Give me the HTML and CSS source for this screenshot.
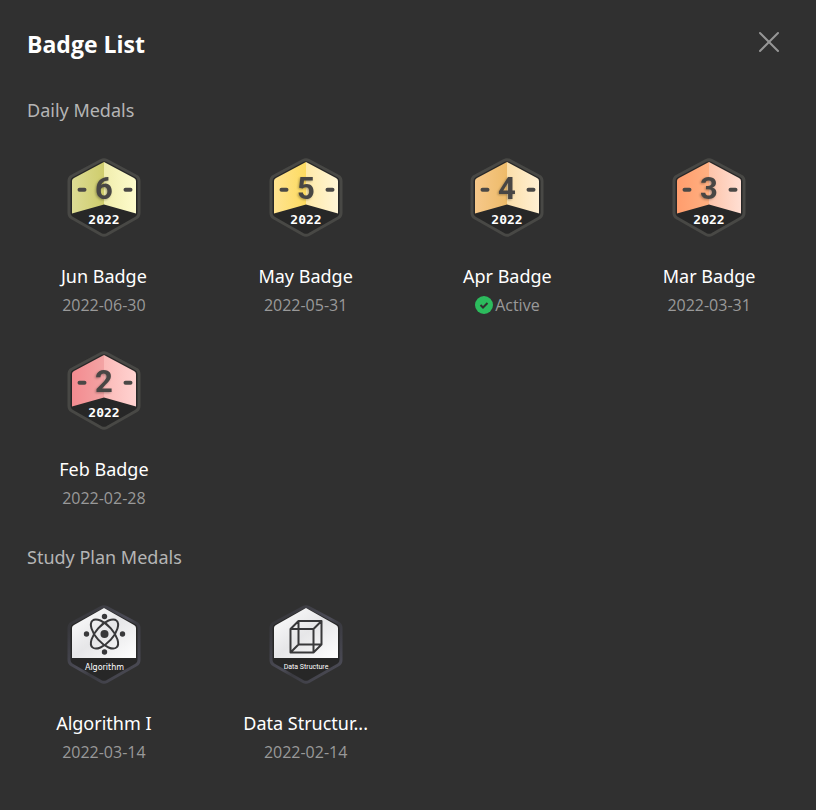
FILE: index.html
```html
<!DOCTYPE html>
<html lang="en">
<head>
    <meta charset="UTF-8">
    <meta name="viewport" content="width=device-width, initial-scale=1.0">
    <title>Badge List</title>
    <link rel="stylesheet" href="styles.css">
</head>
<body>
    <!-- Shared gradients and medal shapes -->
    <svg class="defs" aria-hidden="true">
        <defs>
            <linearGradient id="jun-l"><stop offset="0" stop-color="#dcdb94"/><stop offset="1" stop-color="#cfcd6c"/></linearGradient>
            <linearGradient id="jun-r"><stop offset="0" stop-color="#f0edad"/><stop offset="1" stop-color="#fefccd"/></linearGradient>
            <linearGradient id="may-l"><stop offset="0" stop-color="#ffe391"/><stop offset="1" stop-color="#fddb60"/></linearGradient>
            <linearGradient id="may-r"><stop offset="0" stop-color="#ffeaa9"/><stop offset="1" stop-color="#fff5d6"/></linearGradient>
            <linearGradient id="apr-l"><stop offset="0" stop-color="#f6c88a"/><stop offset="1" stop-color="#eebb69"/></linearGradient>
            <linearGradient id="apr-r"><stop offset="0" stop-color="#fbdfaa"/><stop offset="1" stop-color="#fff0d3"/></linearGradient>
            <linearGradient id="mar-l"><stop offset="0" stop-color="#ff9d6d"/><stop offset="1" stop-color="#ffb081"/></linearGradient>
            <linearGradient id="mar-r"><stop offset="0" stop-color="#fdc4aa"/><stop offset="1" stop-color="#ffdfd3"/></linearGradient>
            <linearGradient id="feb-l"><stop offset="0" stop-color="#f38b90"/><stop offset="1" stop-color="#f3a4a4"/></linearGradient>
            <linearGradient id="feb-r"><stop offset="0" stop-color="#fbbab8"/><stop offset="1" stop-color="#ffd3d1"/></linearGradient>
            <linearGradient id="plate" x1="0" y1="0" x2="1" y2="1"><stop offset="0" stop-color="#ffffff"/><stop offset=".5" stop-color="#e6e6e8"/><stop offset="1" stop-color="#ffffff"/></linearGradient>
            <linearGradient id="rim" x1="0" y1="0" x2="1" y2="1"><stop offset="0" stop-color="#303032"/><stop offset=".5" stop-color="#4c4c57"/><stop offset=".6" stop-color="#3a3a40"/><stop offset="1" stop-color="#50505c"/></linearGradient>
            <path id="hexagon" d="M47 10.5Q50 9 53 10.5L82 26Q85 27.500 85 31V63Q85 66.500 82 68L53 84.500Q50 86 47 84.500L18 68Q15 66.500 15 63V31Q15 27.500 18 26Z"/>
            <path id="face-left" d="M18 31Q18 29 20 28L50 12V54.500L18 63.500Z"/>
            <path id="face-right" d="M82 31Q82 29 80 28L50 12V54.500L82 63.500Z"/>
            <path id="dashes" d="M25.500 39.800H30.500M71.500 39.800H76.500"/>
        </defs>
    </svg>

    <main class="modal">
        <header class="modal-header">
            <h1>Badge List</h1>
            <button type="button" class="close" aria-label="Close">
                <svg viewBox="0 0 22 22"><path d="M2 2L20 20M20 2L2 20"/></svg>
            </button>
        </header>

        <section>
            <h2>Daily Medals</h2>
            <ul class="badges">
                <li class="badge">
                    <svg class="medal" viewBox="10 5 80 85">
                        <use href="#hexagon" class="frame"/>
                        <use href="#face-left" fill="url(#jun-l)"/>
                        <use href="#face-right" fill="url(#jun-r)"/>
                        <use href="#dashes" class="dashes"/>
                        <text class="month" x="50" y="49">6</text>
                        <text class="year" x="50" y="74">2022</text>
                    </svg>
                    <h3>Jun Badge</h3>
                    <p>2022-06-30</p>
                </li>
                <li class="badge">
                    <svg class="medal" viewBox="10 5 80 85">
                        <use href="#hexagon" class="frame"/>
                        <use href="#face-left" fill="url(#may-l)"/>
                        <use href="#face-right" fill="url(#may-r)"/>
                        <use href="#dashes" class="dashes"/>
                        <text class="month" x="50" y="49">5</text>
                        <text class="year" x="50" y="74">2022</text>
                    </svg>
                    <h3>May Badge</h3>
                    <p>2022-05-31</p>
                </li>
                <li class="badge">
                    <svg class="medal" viewBox="10 5 80 85">
                        <use href="#hexagon" class="frame"/>
                        <use href="#face-left" fill="url(#apr-l)"/>
                        <use href="#face-right" fill="url(#apr-r)"/>
                        <use href="#dashes" class="dashes"/>
                        <text class="month" x="50" y="49">4</text>
                        <text class="year" x="50" y="74">2022</text>
                    </svg>
                    <h3>Apr Badge</h3>
                    <p class="active">
                        <svg class="check" viewBox="0 0 18 18"><circle cx="9" cy="9" r="9"/><path d="M5.500 9L8 11.500L12.500 7"/></svg>Active
                    </p>
                </li>
                <li class="badge">
                    <svg class="medal" viewBox="10 5 80 85">
                        <use href="#hexagon" class="frame"/>
                        <use href="#face-left" fill="url(#mar-l)"/>
                        <use href="#face-right" fill="url(#mar-r)"/>
                        <use href="#dashes" class="dashes"/>
                        <text class="month" x="50" y="49">3</text>
                        <text class="year" x="50" y="74">2022</text>
                    </svg>
                    <h3>Mar Badge</h3>
                    <p>2022-03-31</p>
                </li>
                <li class="badge">
                    <svg class="medal" viewBox="10 5 80 85">
                        <use href="#hexagon" class="frame"/>
                        <use href="#face-left" fill="url(#feb-l)"/>
                        <use href="#face-right" fill="url(#feb-r)"/>
                        <use href="#dashes" class="dashes"/>
                        <text class="month" x="50" y="49">2</text>
                        <text class="year" x="50" y="74">2022</text>
                    </svg>
                    <h3>Feb Badge</h3>
                    <p>2022-02-28</p>
                </li>
            </ul>
        </section>

        <section>
            <h2>Study Plan Medals</h2>
            <ul class="badges">
                <li class="badge">
                    <svg class="medal plan" viewBox="10 5 80 85">
                        <use href="#hexagon" class="frame"/>
                        <path class="plate" d="M18 31Q18 29 20 28L50 11L80 28Q82 29 82 31V61H18Z"/>
                        <g class="drawing">
                            <ellipse cx="50.500" cy="37" rx="18" ry="8.500" transform="rotate(48 50.500 37)"/>
                            <ellipse cx="50.500" cy="37" rx="18" ry="8.500" transform="rotate(-48 50.500 37)"/>
                        </g>
                        <g class="dots">
                            <circle cx="50.500" cy="37" r="4"/>
                            <circle cx="50.500" cy="19.500" r="2.700"/>
                            <circle cx="50.500" cy="55" r="2.700"/>
                            <circle cx="32.500" cy="37" r="2.700"/>
                            <circle cx="68.500" cy="37" r="2.700"/>
                        </g>
                        <text class="plan-name" x="50.500" y="73">Algorithm</text>
                    </svg>
                    <h3>Algorithm I</h3>
                    <p>2022-03-14</p>
                </li>
                <li class="badge">
                    <svg class="medal plan" viewBox="10 5 80 85">
                        <use href="#hexagon" class="frame"/>
                        <path class="plate" d="M18 31Q18 29 20 28L50 11L80 28Q82 29 82 31V61H18Z"/>
                        <path class="drawing" d="M34.500 32H57.500V55.500H34.500ZM42.500 24H65.500V47.500H42.500ZM34.500 32L42.500 24M57.500 32L65.500 24M57.500 55.500L65.500 47.500M34.500 55.500L42.500 47.500"/>
                        <text class="plan-name long" x="50" y="72">Data Structure</text>
                    </svg>
                    <h3>Data Structur...</h3>
                    <p>2022-02-14</p>
                </li>
            </ul>
        </section>
    </main>
</body>
</html>
```

FILE: styles.css
```css
* {
    box-sizing: border-box;
}
body {
    margin: 0;
    background-color: #303030;
    color: #fff;
    font-family: 'Noto Sans', 'Open Sans', sans-serif;
}
h1, h2, h3, p, ul {
    margin: 0;
    padding: 0;
}
.defs {
    position: absolute;
    width: 0;
    height: 0;
}
.modal {
    padding: 28px 30px 42px 27px;
}
.modal-header {
    display: flex;
    justify-content: space-between;
    align-items: flex-start;
    padding-right: 6px;
    margin-bottom: 36px;
}
h1 {
    font-family: 'Open Sans', sans-serif;
    font-size: 23px;
    line-height: 32px;
    font-weight: 700;
}
.close {
    width: 22px;
    height: 22px;
    margin-top: 3px;
    padding: 0;
    border: none;
    background: none;
    cursor: pointer;
}
.close svg {
    display: block;
    width: 22px;
    height: 22px;
    fill: none;
    stroke: #969696;
    stroke-width: 2;
    stroke-linecap: round;
}
section + section {
    margin-top: 30px;
}
h2 {
    margin-bottom: 31px;
    font-size: 18px;
    line-height: 28px;
    font-weight: 400;
    color: #b5b5b5;
}
.badges {
    display: grid;
    grid-template-columns: repeat(4, 1fr);
    gap: 28px 48px;
    list-style: none;
}
.badge {
    display: flex;
    flex-direction: column;
    align-items: center;
    min-width: 0;
}
.medal {
    width: 80px;
    height: 85px;
    margin-bottom: 22px;
}
.badge h3 {
    white-space: nowrap;
    font-size: 18px;
    line-height: 28px;
    font-weight: 400;
}
.badge p {
    font-family: 'Open Sans', sans-serif;
    font-size: 16px;
    line-height: 30px;
    color: #999;
}
.badge .active {
    display: flex;
    align-items: center;
    gap: 2px;
}
.check {
    width: 18px;
    height: 18px;
    fill: #2cbb5d;
}
.check path {
    fill: none;
    stroke: #303030;
    stroke-width: 2;
}

/* medal artwork */
.frame {
    fill: #272727;
    stroke: #484845;
    stroke-width: 3;
}
.dashes {
    stroke: #4a4846;
    stroke-width: 4;
    stroke-linecap: round;
}
.month {
    fill: #484644;
    font-family: Roboto, sans-serif;
    font-size: 31px;
    font-weight: 700;
    text-anchor: middle;
    filter: drop-shadow(-1px 1px 1px rgba(0, 0, 0, 0.3));
}
.year {
    fill: #fff;
    font-family: 'DejaVu Sans Mono', 'DejaVu Sans', monospace;
    font-size: 13px;
    font-weight: 700;
    text-anchor: middle;
}
.plan .frame {
    stroke: url(#rim);
}
.plate {
    fill: url(#plate);
}
.drawing {
    fill: none;
    stroke: #38383a;
    stroke-width: 2;
    stroke-linejoin: round;
}
.dots {
    fill: #38383a;
}
.plan-name {
    fill: #fff;
    font-family: 'DejaVu Sans', sans-serif;
    font-size: 8px;
    text-anchor: middle;
}
.plan-name.long {
    font-family: Roboto, sans-serif;
    font-size: 7px;
}
```
